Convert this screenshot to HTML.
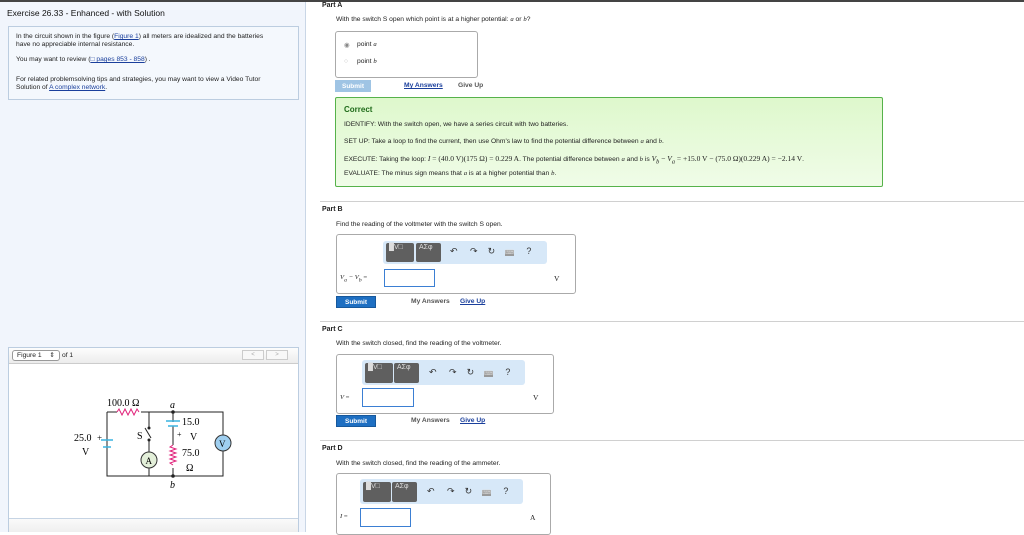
<!DOCTYPE html>
<html><head><meta charset="utf-8"><style>
*{margin:0;padding:0;box-sizing:border-box}
body{width:1024px;height:532px;overflow:hidden;background:#fff;font-family:"Liberation Sans",Arial,sans-serif;color:#222;position:relative}
.a{position:absolute}
.t{font-size:6.7px;white-space:nowrap}
a,.lk{color:#1a3f9c;text-decoration:underline}
.m{font-family:"Liberation Serif",serif;font-style:italic}
.hdr{font-size:7px;font-weight:bold;color:#222}
.sub{background:#1e6fc2;color:#fff;font-size:6.5px;font-weight:bold;text-align:center;line-height:11px;border:1px solid #17589b}
.box{border:1px solid #aaa;border-radius:3px;background:#fff}
.tb{background:#d7e8f8;border-radius:3px}
.bt{background:#5f5f5f;border-radius:2px;color:#ddd;font-size:7px;line-height:10px;padding-left:3px}
.inp{border:1px solid #3b7fd3;background:#fff}
.sep{height:1px;background:#d0d0d0;left:320px;width:704px}
</style></head><body>
<div class="a" style="left:0;top:0;width:1024px;height:2px;background:#444"></div>
<div class="a" style="left:0;top:2px;width:306px;height:530px;background:#f1f5fc;border-right:1px solid #c9d6e6"></div>
<div class="a" style="left:7px;top:8px;font-size:8.5px;color:#111">Exercise 26.33 - Enhanced - with Solution</div>
<div class="a" style="left:8px;top:26px;width:291px;height:74px;border:1px solid #bccde0;background:#f4f8fd"></div>
<div class="a t" style="left:16px;top:33px;line-height:8px">In the circuit shown in the figure (<a>Figure 1</a>) all meters are idealized and the batteries<br>have no appreciable internal resistance.</div>
<div class="a t" style="left:16px;top:56px">You may want to review (<a>&#9633; pages 853 - 858</a>) .</div>
<div class="a t" style="left:16px;top:76px;line-height:8px">For related problemsolving tips and strategies, you may want to view a Video Tutor<br>Solution of <a>A complex network</a>.</div>

<div class="a" style="left:8px;top:347px;width:291px;height:185px;border:1px solid #bccde0;background:#fff"></div>
<div class="a" style="left:9px;top:348px;width:289px;height:16px;background:linear-gradient(#fdfdfd,#ececec);border-bottom:1px solid #ccc"></div>
<div class="a t" style="left:12px;top:350px;width:48px;height:11px;border:1px solid #999;border-radius:3px;background:#fff;padding-left:4px;line-height:9px">Figure 1 <span style="margin-left:6px">&#8661;</span></div>
<div class="a t" style="left:62px;top:352px">of 1</div>
<div class="a" style="left:242px;top:350px;width:22px;height:10px;border:1px solid #ccc;background:#f8f8f8;font-size:6px;color:#aaa;text-align:center;line-height:9px">&lt;</div>
<div class="a" style="left:266px;top:350px;width:22px;height:10px;border:1px solid #ccc;background:#f8f8f8;font-size:6px;color:#aaa;text-align:center;line-height:9px">&gt;</div>
<div class="a" style="left:9px;top:518px;width:289px;height:1px;background:#c6d4e4"></div>
<div class="a" style="left:9px;top:519px;width:289px;height:13px;background:linear-gradient(#fafafa,#efefef)"></div>

<svg class="a" style="left:0;top:0" width="306" height="532" font-family="Liberation Serif,serif" font-size="10">
<g stroke="#222" stroke-width="1" fill="none">
<path d="M107 412H117M141 412H223V476H107V412"/>
<path d="M107 412V440M107 448V476"/>
<path d="M149 412V428M149 440V452M149 468V476"/>
<path d="M173 412V422M173 426V445M173 468V476"/>
<path d="M145 428L151 438"/>
</g>
<path d="M117 412l2-3 3 6 3-6 3 6 3-6 3 6 3-6 2 3" stroke="#e0217a" fill="none"/>
<path d="M173 445l-3 2 6 2-6 2 6 2-6 2 6 2-6 2 6 2-6 2 3 2" stroke="#e0217a" fill="none"/>
<line x1="101" y1="440" x2="113" y2="440" stroke="#39b2e0" stroke-width="1.5"/>
<line x1="103" y1="447" x2="111" y2="447" stroke="#39b2e0" stroke-width="1.5"/>
<line x1="166" y1="421" x2="180" y2="421" stroke="#39b2e0" stroke-width="1.5"/>
<line x1="168" y1="426" x2="178" y2="426" stroke="#39b2e0" stroke-width="1.5"/>
<circle cx="149" cy="428" r="1.5" fill="#222"/><circle cx="149" cy="440" r="1.5" fill="#222"/>
<circle cx="173" cy="412" r="1.8" fill="#222"/><circle cx="173" cy="476" r="1.8" fill="#222"/>
<circle cx="149" cy="460" r="8" fill="#e3efd9" stroke="#333"/>
<text x="145.5" y="464" font-size="9">A</text>
<circle cx="223" cy="443" r="8" fill="#9fcff0" stroke="#333"/>
<text x="219" y="447" font-size="9">V</text>
<text x="107" y="406">100.0 Ω</text>
<text x="170" y="408" font-style="italic">a</text>
<text x="170" y="488" font-style="italic">b</text>
<text x="182" y="425">15.0</text>
<text x="177" y="437" font-size="8">+</text><text x="190" y="440">V</text>
<text x="182" y="456">75.0</text><text x="186" y="471">Ω</text>
<text x="74" y="441">25.0</text><text x="97" y="441" font-size="9">+</text>
<text x="82" y="455">V</text>
<text x="137" y="439">S</text>
</svg>

<div class="a hdr" style="left:322px;top:2px">Part A</div>
<div class="a t" style="left:336px;top:16px">With the switch S open which point is at a higher potential: <span class="m">a</span> or <span class="m">b</span>?</div>
<div class="a box" style="left:335px;top:31px;width:143px;height:47px"></div>
<div class="a t" style="left:344px;top:41px;color:#888">&#9673;</div><div class="a t" style="left:357px;top:41px">point <span class="m">a</span></div>
<div class="a t" style="left:344px;top:58px;color:#bbb">&#9675;</div><div class="a t" style="left:357px;top:58px">point <span class="m">b</span></div>
<div class="a sub" style="left:335px;top:80px;width:36px;height:12px;background:#9fc4e4;border-color:#9fc4e4">Submit</div>
<div class="a t lk" style="left:404px;top:82px;font-weight:bold">My Answers</div>
<div class="a t" style="left:458px;top:82px;font-weight:bold;color:#555">Give Up</div>
<div class="a" style="left:335px;top:97px;width:548px;height:90px;border:1px solid #56b24a;border-radius:2px;background:linear-gradient(#def8cc,#f0fce8)"></div>
<div class="a" style="left:344px;top:105px;font-size:8px;font-weight:bold;color:#1f6b1a">Correct</div>
<div class="a t" style="left:344px;top:121px">IDENTIFY: With the switch open, we have a series circuit with two batteries.</div>
<div class="a t" style="left:344px;top:138px">SET UP: Take a loop to find the current, then use Ohm's law to find the potential difference between <span class="m">a</span> and <span class="m">b</span>.</div>
<div class="a t" style="left:344px;top:154px">EXECUTE: Taking the loop: <span style="font-family:'Liberation Serif',serif;font-size:7.5px"><i>I</i> = (40.0 V)(175 Ω) = 0.229 A</span>. The potential difference between <span class="m">a</span> and <span class="m">b</span> is <span style="font-family:'Liberation Serif',serif;font-size:7.5px"><i>V<sub>b</sub></i> − <i>V<sub>a</sub></i> = +15.0 V − (75.0 Ω)(0.229 A) = −2.14 V</span>.</div>
<div class="a t" style="left:344px;top:170px">EVALUATE: The minus sign means that <span class="m">a</span> is at a higher potential than <span class="m">b</span>.</div>

<div class="a sep" style="top:201px"></div>
<div class="a hdr" style="left:322px;top:206px">Part B</div>
<div class="a t" style="left:336px;top:221px">Find the reading of the voltmeter with the switch S open.</div>
<div class="a box" style="left:336px;top:234px;width:240px;height:60px"></div>
<div class="a tb" style="left:383px;top:241px;width:164px;height:23px"></div>
<div class="a bt" style="left:386px;top:243px;width:28px;height:19px">&#9608;V&#9633;</div>
<div class="a bt" style="left:416px;top:243px;width:25px;height:19px">ΑΣφ</div>
<div class="a t" style="left:450px;top:246px;font-size:9px;color:#333">&#8630; &nbsp;&nbsp;&nbsp; &#8631; &nbsp;&nbsp; &#8635; &nbsp;&nbsp; <span style="font-size:6px;background:#999;color:#ddd">&#9000;</span> &nbsp;&nbsp;&nbsp; ?</div>
<div class="a t m" style="left:340px;top:274px">V<sub>a</sub> − V<sub>b</sub> <span style="font-style:normal">=</span></div>
<div class="a inp" style="left:384px;top:269px;width:51px;height:18px"></div>
<div class="a t" style="left:554px;top:274px;font-family:'Liberation Serif',serif;font-size:7.5px">V</div>
<div class="a sub" style="left:336px;top:296px;width:40px;height:12px">Submit</div>
<div class="a t" style="left:411px;top:298px;font-weight:bold;color:#555">My Answers</div>
<div class="a t lk" style="left:460px;top:298px;font-weight:bold">Give Up</div>

<div class="a sep" style="top:321px"></div>
<div class="a hdr" style="left:322px;top:326px">Part C</div>
<div class="a t" style="left:336px;top:340px">With the switch closed, find the reading of the voltmeter.</div>
<div class="a box" style="left:336px;top:354px;width:218px;height:60px"></div>
<div class="a tb" style="left:362px;top:360px;width:163px;height:25px"></div>
<div class="a bt" style="left:365px;top:363px;width:28px;height:20px">&#9608;V&#9633;</div>
<div class="a bt" style="left:394px;top:363px;width:25px;height:20px">ΑΣφ</div>
<div class="a t" style="left:429px;top:367px;font-size:9px;color:#333">&#8630; &nbsp;&nbsp;&nbsp; &#8631; &nbsp;&nbsp; &#8635; &nbsp;&nbsp; <span style="font-size:6px;background:#999;color:#ddd">&#9000;</span> &nbsp;&nbsp;&nbsp; ?</div>
<div class="a t m" style="left:340px;top:394px">V <span style="font-style:normal">=</span></div>
<div class="a inp" style="left:362px;top:388px;width:52px;height:19px"></div>
<div class="a t" style="left:533px;top:393px;font-family:'Liberation Serif',serif;font-size:7.5px">V</div>
<div class="a sub" style="left:336px;top:415px;width:40px;height:12px">Submit</div>
<div class="a t" style="left:411px;top:417px;font-weight:bold;color:#555">My Answers</div>
<div class="a t lk" style="left:460px;top:417px;font-weight:bold">Give Up</div>

<div class="a sep" style="top:440px"></div>
<div class="a hdr" style="left:322px;top:445px">Part D</div>
<div class="a t" style="left:336px;top:460px">With the switch closed, find the reading of the ammeter.</div>
<div class="a box" style="left:336px;top:473px;width:215px;height:62px"></div>
<div class="a tb" style="left:360px;top:479px;width:163px;height:25px"></div>
<div class="a bt" style="left:363px;top:482px;width:28px;height:20px">&#9608;V&#9633;</div>
<div class="a bt" style="left:392px;top:482px;width:25px;height:20px">ΑΣφ</div>
<div class="a t" style="left:427px;top:486px;font-size:9px;color:#333">&#8630; &nbsp;&nbsp;&nbsp; &#8631; &nbsp;&nbsp; &#8635; &nbsp;&nbsp; <span style="font-size:6px;background:#999;color:#ddd">&#9000;</span> &nbsp;&nbsp;&nbsp; ?</div>
<div class="a t m" style="left:340px;top:513px">I <span style="font-style:normal">=</span></div>
<div class="a inp" style="left:360px;top:508px;width:51px;height:19px"></div>
<div class="a t" style="left:530px;top:513px;font-family:'Liberation Serif',serif;font-size:7.5px">A</div>
</body></html>
